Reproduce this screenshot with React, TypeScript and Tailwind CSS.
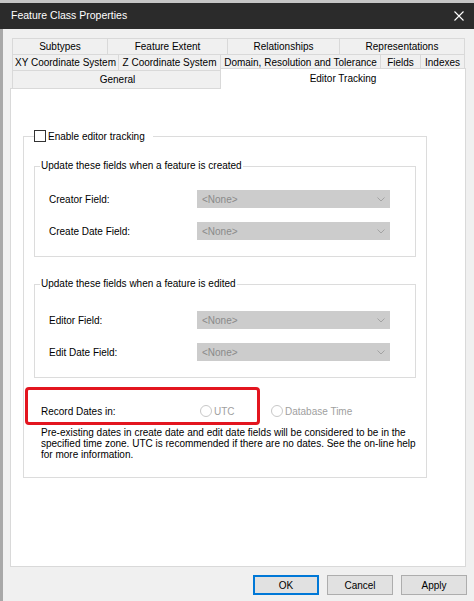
import React from "react";

const row1 = [
  { label: "Subtypes", w: "w-[95px]" },
  { label: "Feature Extent", w: "w-[120px]" },
  { label: "Relationships", w: "w-[112px]" },
  { label: "Representations", w: "w-[126px]", last: true },
];

const row2 = [
  { label: "XY Coordinate System", w: "w-[106px]" },
  { label: "Z Coordinate System", w: "w-[102px]" },
  { label: "Domain, Resolution and Tolerance", w: "w-[160px]" },
  { label: "Fields", w: "w-[40px]" },
  { label: "Indexes", w: "w-[45px]", last: true },
];

function Tab({ label, w, last }: { label: string; w: string; last?: boolean }) {
  return (
    <div
      className={`${w} h-[16px] border-t border-l border-[#d9d9d9] bg-[#f0f0f0] flex items-center justify-center whitespace-nowrap leading-[12px] ${
        last ? "border-r" : ""
      }`}
    >
      {label}
    </div>
  );
}

function NoneSelect() {
  return (
    <div className="w-[193px] h-[18px] bg-[#cccccc] flex items-center justify-between pl-[5px] pr-[5px] text-[#8a8a8a]">
      <span>&lt;None&gt;</span>
      <svg width="8" height="5" viewBox="0 0 8 5" className="text-[#a3a3a3]">
        <path d="M0.5 0.5 L4 4 L7.5 0.5" fill="none" stroke="currentColor" strokeWidth="1" />
      </svg>
    </div>
  );
}

function FieldRow({ label }: { label: string }) {
  return (
    <div className="flex items-center ml-[9px]">
      <span className="w-[148px]">{label}</span>
      <NoneSelect />
    </div>
  );
}

function Radio({ label, w }: { label: string; w?: string }) {
  return (
    <div className={`flex items-center ${w ?? ""}`}>
      <span className="w-[12px] h-[12px] rounded-full border border-[#c8c8c8] bg-white" />
      <span className="ml-[2px] text-[#a0a0a0]">{label}</span>
    </div>
  );
}

export default function App() {
  return (
    <div className="w-[474px] h-[601px] overflow-hidden bg-[#c6c6c6] pt-[3px] flex flex-col font-['Liberation_Sans',Arial,sans-serif] text-[10px] text-black">
      {/* title bar */}
      <div className="h-[26px] bg-[#2b2b2b] flex items-center justify-between pl-[11px] pr-[10px] text-white text-[10.5px]">
        <span>Feature Class Properties</span>
        <svg width="10" height="10" viewBox="0 0 10 10">
          <path d="M0.5 0.5 L9.5 9.5 M9.5 0.5 L0.5 9.5" stroke="#ffffff" strokeWidth="1.1" />
        </svg>
      </div>

      {/* body */}
      <div className="flex-1 bg-[#f0f0f0] border-l-[3px] border-[#a8a8a8] pl-[7px] pr-[8px] pt-[9px] flex flex-col">
        <div className="ml-[2px] flex flex-col">
          <div className="flex">
            {row1.map((t) => (
              <Tab key={t.label} {...t} />
            ))}
          </div>
          <div className="flex">
            {row2.map((t) => (
              <Tab key={t.label} {...t} />
            ))}
          </div>
          <div className="flex items-end h-[18px]">
            <div className="w-[210px] h-[18px] border-t border-l border-[#d9d9d9] bg-[#f0f0f0] flex items-center justify-center">
              General
            </div>
            <div className="relative z-10 -ml-[2px] -mb-[1px] w-[246px] h-[21px] border border-b-0 border-[#d9d9d9] bg-white flex items-center justify-center pb-[1px]">
              Editor Tracking
            </div>
          </div>
        </div>

        {/* tab panel */}
        <div className="h-[479px] bg-white border border-[#d9d9d9] pt-[41px] pl-[12px]">
          <fieldset className="w-[398px] border border-[#dcdcdc] px-[10px] pt-[18px] pb-[17px]">
            <legend className="flex items-center h-[12px] pr-[8px]">
              <span className="w-[12px] h-[12px] border border-[#333333] bg-white" />
              <span className="ml-[2px]">Enable editor tracking</span>
            </legend>

            <fieldset className="border border-[#dcdcdc] pl-[5px] pr-[18px] pt-[18px] pb-[16px]">
              <legend className="px-[1px] leading-[12px]">Update these fields when a feature is created</legend>
              <div className="flex flex-col gap-[14px]">
                <FieldRow label="Creator Field:" />
                <FieldRow label="Create Date Field:" />
              </div>
            </fieldset>

            <fieldset className="mt-[21px] border border-[#dcdcdc] pl-[5px] pr-[18px] pt-[21px] pb-[16px]">
              <legend className="px-[1px] leading-[12px]">Update these fields when a feature is edited</legend>
              <div className="flex flex-col gap-[14px]">
                <FieldRow label="Editor Field:" />
                <FieldRow label="Edit Date Field:" />
              </div>
            </fieldset>

            <div className="relative mt-[24px] h-[18px] pl-[7px] flex items-center">
              <span className="w-[159px]">Record Dates in:</span>
              <Radio label="UTC" w="w-[71px]" />
              <Radio label="Database Time" />
              <div className="absolute -left-[9px] -top-[15px] w-[235px] h-[38px] border-[3px] border-[#e3151f] rounded-[4px]" />
            </div>

            <p className="mt-[7px] pl-[7px] leading-[11px] whitespace-nowrap">
              Pre-existing dates in create date and edit date fields will be considered to be in the
              <br />
              specified time zone. UTC is recommended if there are no dates. See the on-line help
              <br />
              for more information.
            </p>
          </fieldset>
        </div>

        {/* buttons */}
        <div className="mt-[8px] -mr-[1px] flex justify-end gap-[8px]">
          <button className="w-[66px] h-[20px] bg-[#e1e1e1] border border-[#0078d7] shadow-[inset_0_0_0_1px_#0078d7]">
            OK
          </button>
          <button className="w-[66px] h-[20px] bg-[#e1e1e1] border border-[#adadad]">Cancel</button>
          <button className="w-[66px] h-[20px] bg-[#e1e1e1] border border-[#adadad]">Apply</button>
        </div>
      </div>
    </div>
  );
}
